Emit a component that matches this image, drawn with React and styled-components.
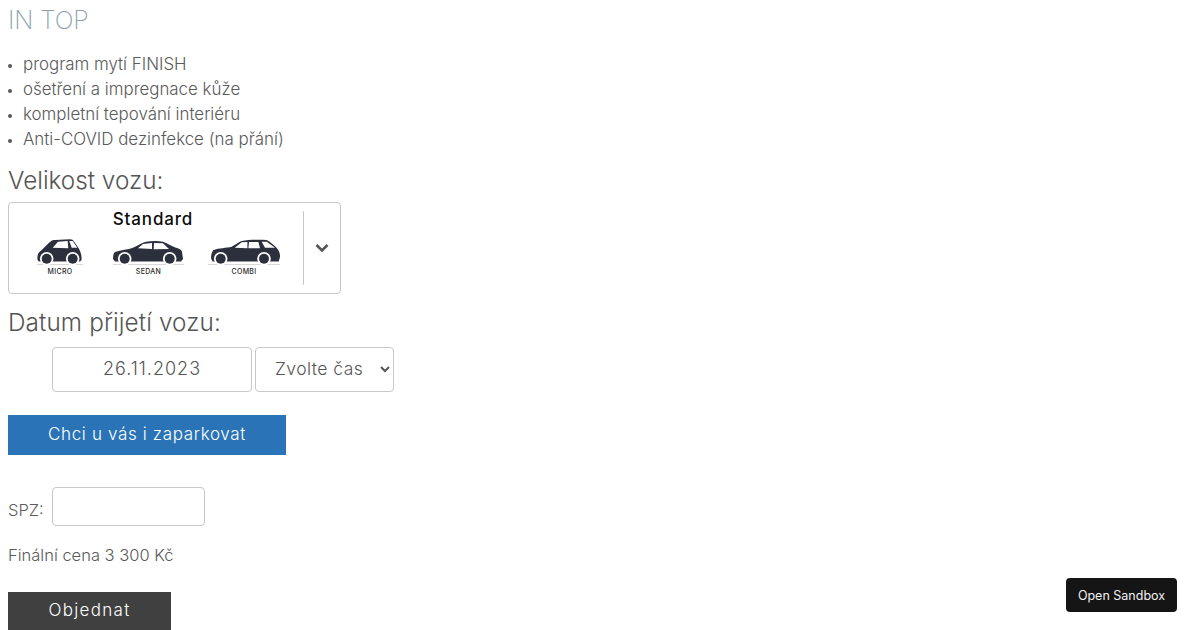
import React from 'react';
import styled, { createGlobalStyle } from 'styled-components';

const Global = createGlobalStyle`
  html, body { margin: 0; padding: 0; background: #fff; }
  body { font-family: "Inter", "Liberation Sans", sans-serif; font-weight: 300; color: #5c5c5c; }
`;

const Page = styled.main`
  height: 630px;
  overflow: hidden;
  padding: 0 8px;
  box-sizing: border-box;
`;

const Title = styled.h2`
  margin: 0;
  height: 41px;
  line-height: 41px;
  font-size: 25px;
  font-weight: 250;
  letter-spacing: -0.2px;
  color: #8ca2ad;
`;

const Features = styled.ul`
  margin: 10px 0 0;
  padding: 1px 0 0 15px;
  font-size: 16.9px;
  line-height: 25px;
  color: #5a5a5a;

  li::marker {
    font-size: 12px;
  }
`;

const SectionLabel = styled.h3`
  margin: ${p => p.$top}px 0 ${p => p.$bottom}px;
  font-size: 24.3px;
  line-height: 30px;
  font-weight: 300;
  letter-spacing: ${p => p.$spacing || 0}px;
  color: #555;
`;

const SizeSelect = styled.div`
  width: 333px;
  height: 92px;
  box-sizing: border-box;
  border: 1px solid #c8c8c8;
  border-radius: 4px;
  display: flex;
  align-items: center;
  padding: 8px 0;
`;

const SizeOption = styled.div`
  width: 294px;
  height: 100%;
  display: flex;
  flex-direction: column;
`;

const SizeName = styled.div`
  align-self: center;
  margin: -2px 6px 0 0;
  font-size: 17px;
  line-height: 20px;
  font-weight: 500;
  letter-spacing: 0.85px;
  color: #0c0c0c;
`;

const CarRow = styled.div`
  display: flex;
  margin-top: 9px;
  padding-left: 28px;
`;

const Car = styled.figure`
  margin: 0 0 0 ${p => p.$gap}px;
  display: flex;
  flex-direction: column;
  align-items: center;
  width: ${p => p.$w}px;
`;

const CarName = styled.figcaption`
  font-size: 7px;
  line-height: 9px;
  font-weight: 500;
  letter-spacing: 0.3px;
  color: #2a2a2a;
  margin-top: 2px;
`;

const ArrowBox = styled.div`
  flex: 1;
  height: 100%;
  border-left: 1px solid #c8c8c8;
  display: flex;
  align-items: center;
  justify-content: center;
  color: #555;
`;

const DateRow = styled.div`
  display: flex;
  gap: 3px;
  margin: 10px 0 0 44px;
`;

const fieldBase = `
  box-sizing: border-box;
  border: 1px solid #c8c8c8;
  border-radius: 4px;
  background: #fff;
  font-family: "Inter", "Liberation Sans", sans-serif;
  font-weight: 300;
  color: #555;
`;

const DateField = styled.div`
  ${fieldBase}
  width: 200px;
  height: 45px;
  display: flex;
  align-items: center;
  justify-content: center;
  font-size: 18px;
  letter-spacing: 1px;
  padding-bottom: 2px;
`;

const TimeField = styled.select`
  ${fieldBase}
  width: 139px;
  height: 45px;
  padding: 0 0 3px 15px;
  font-size: 17.5px;
  letter-spacing: 0.45px;
`;

const Button = styled.div`
  display: flex;
  align-items: center;
  justify-content: center;
  width: ${p => p.$w}px;
  height: ${p => p.$h}px;
  margin-top: ${p => p.$top}px;
  background: ${p => p.$bg};
  color: #fff;
  font-size: 17px;
  letter-spacing: ${p => p.$spacing}px;
  padding-bottom: 3px;
  box-sizing: border-box;
`;

const PlateRow = styled.label`
  display: flex;
  align-items: flex-end;
  gap: 8px;
  margin-top: 32px;
  font-size: 16.5px;
`;

const PlateLabel = styled.span`
  padding-bottom: 6px;
`;

const PlateInput = styled.input`
  ${fieldBase}
  width: 153px;
  height: 39px;
  display: block;
`;

const Price = styled.p`
  margin: 18px 0 0;
  font-size: 16.5px;
  line-height: 22px;
  color: #5a5a5a;
`;

const SandboxLink = styled.a`
  position: fixed;
  right: 23px;
  bottom: 18px;
  width: 111px;
  height: 34px;
  display: flex;
  align-items: center;
  justify-content: center;
  background: #151515;
  border-radius: 4px;
  color: #f2f2f2;
  font-weight: 400;
  font-size: 12.5px;
`;

const CAR_COLOR = '#2c303c';

const Wheels = ({ a, b }) => (
  <>
    {[a, b].map(x => (
      <g key={x}>
        <circle cx={x} cy={20.8} r={6.8} fill="#fff" />
        <circle cx={x} cy={20.8} r={5} fill={CAR_COLOR} />
      </g>
    ))}
  </>
);

const Ground = ({ w }) => <rect x="0" y="26" width={w} height="0.8" fill="#cfcfcf" />;

const MicroCar = () => (
  <svg width="46" height="27" viewBox="0 0 46 27">
    <Ground w={46} />
    <path fill={CAR_COLOR} d="M0.5 22C0 18 1 15 3 13.5 7 10 11 5 15 2.5 16 2 17 2 18 2L33 1.3C35 1.3 36 2 37 3.5L41.5 10C43.5 13 45 18 44.5 22L43 23.5H2z" />
    <path fill="#fff" d="M15.7 9.7L21 3.7 30.7 3 31.3 10.3zM32.3 3L35.7 3 40.3 9.7 34.7 9.7z" />
    <Wheels a={9.7} b={35.7} />
  </svg>
);

const SedanCar = () => (
  <svg width="71" height="27" viewBox="0 0 71 27">
    <Ground w={71} />
    <path fill={CAR_COLOR} d="M0 21C0 18 0.5 15 2 14 8 12 15 11.5 20 9.7 25 7.5 29 4.5 33 3.7 39 2.8 45 2.8 50 3.7 55 5.5 59 8.5 63 9.7 66 10.5 69 12 69 14L70 21 68 23.5H2z" />
    <path fill="#fff" d="M25 10.3L30 6 39 5 39 11zM41 5L50 5.3 56 11 40.7 11.3z" />
    <Wheels a={11.7} b={56.7} />
  </svg>
);

const CombiCar = () => (
  <svg width="72" height="27" viewBox="0 0 72 27">
    <Ground w={72} />
    <g transform="translate(2.7 0)">
      <path fill={CAR_COLOR} d="M0.5 21C0 18 1 14 2.7 12 8 10 16 10 21 8.7 25 6.5 28 4 31 3 38 1.5 48 1.500 56 2 60 4 63 7 66 10 68 12 69.5 15 69.3 19L68 23.500H2z" />
      <path fill="#fff" d="M24 9.7L31 4.3 36.7 4 36.7 10.3zM38.3 4L47.7 4 49.3 10.3 37.7 10.3zM51 3.7L56 3.7 64.3 9.7 54.3 9.7z" />
      <Wheels a={10} b={53.3} />
    </g>
  </svg>
);

const App = () => (
  <Page>
    <Global />
    <Title>IN TOP</Title>
    <Features>
      <li>program mytí FINISH</li>
      <li>ošetření a impregnace kůže</li>
      <li>kompletní tepování interiéru</li>
      <li>Anti-COVID dezinfekce (na přání)</li>
    </Features>

    <SectionLabel $top={13} $bottom={7}>Velikost vozu:</SectionLabel>
    <SizeSelect>
      <SizeOption>
        <SizeName>Standard</SizeName>
        <CarRow>
          <Car $w={46} $gap={0}><MicroCar /><CarName>MICRO</CarName></Car>
          <Car $w={71} $gap={30}><SedanCar /><CarName>SEDAN</CarName></Car>
          <Car $w={72} $gap={24}><CombiCar /><CarName>COMBI</CarName></Car>
        </CarRow>
      </SizeOption>
      <ArrowBox>
        <svg width="14" height="10" viewBox="0 0 14 10">
          <path d="M1.5 2l5.5 5.5L12.5 2" fill="none" stroke="currentColor" strokeWidth="2.6" />
        </svg>
      </ArrowBox>
    </SizeSelect>

    <SectionLabel $top={13} $bottom={0} $spacing={0.12}>Datum přijetí vozu:</SectionLabel>
    <DateRow>
      <DateField>26.11.2023</DateField>
      <TimeField defaultValue="">
        <option value="">Zvolte čas</option>
      </TimeField>
    </DateRow>

    <Button $w={278} $h={40} $top={23} $bg="#2a73b6" $spacing={0.65}>Chci u vás i zaparkovat</Button>

    <PlateRow>
      <PlateLabel>SPZ:</PlateLabel>
      <PlateInput />
    </PlateRow>

    <Price>Finální cena 3 300 Kč</Price>

    <Button $w={163} $h={38} $top={26} $bg="#404040" $spacing={1.3}>Objednat</Button>

    <SandboxLink>Open Sandbox</SandboxLink>
  </Page>
);

export default App;
